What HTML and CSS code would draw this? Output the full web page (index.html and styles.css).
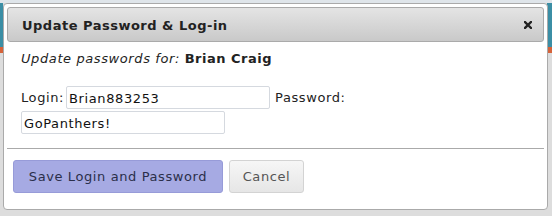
FILE: index.html
```html
<!DOCTYPE html>
<html lang="en">
<head>
    <meta charset="UTF-8">
    <title>Update Password &amp; Log-in</title>
    <link rel="stylesheet" href="styles.css">
</head>
<body>
    <div class="dialog">
        <div class="titlebar">
            <span class="title">Update Password &amp; Log-in</span>
            <button class="close" title="Close">
                <svg width="8" height="8" viewBox="0 0 8 8"><path d="M1 1L7 7M7 1L1 7" stroke="#222" stroke-width="2.4" stroke-linecap="square"/></svg>
            </button>
        </div>

        <div class="content">
            <p class="intro"><em>Update passwords for:</em> <strong>Brian Craig</strong></p>
            <div class="login-row">
                <label for="login" class="lbl-login">Login:</label>
                <input id="login" type="text" value="Brian883253" class="field first">
                <label for="password" class="lbl-pass">Password:</label>
                <input id="password" type="text" value="GoPanthers!" class="field">
            </div>
        </div>

        <div class="buttonpane">
            <button class="btn btn-primary">Save Login and Password</button>
            <button class="btn btn-cancel">Cancel</button>
        </div>
    </div>
</body>
</html>
```

FILE: styles.css
```css
body {
    margin: 0;
    font-family: "DejaVu Sans", Verdana, sans-serif;
    font-size: 13px;
    letter-spacing: 0.6px;
    color: #222;
    background:
        linear-gradient(#dfe5ea, #dfe5ea) 0 0 / 100% 3px no-repeat,
        linear-gradient(#3b8ea5, #3b8ea5) 0 3px / 3px 44px no-repeat,
        linear-gradient(#d6633a, #d6633a) 0 47px / 3px 6px no-repeat,
        linear-gradient(#3b8ea5, #3b8ea5) right 0 top 3px / 5px 44px no-repeat,
        linear-gradient(#d6633a, #d6633a) right 0 top 47px / 5px 6px no-repeat,
        #dddddd;
}
.dialog {
    box-sizing: border-box;
    width: 545px;
    margin: 3px 0 0 3px;
    padding: 3px;
    background: #fff;
    border: 1px solid #aaa;
    border-radius: 4px;
}
.titlebar {
    box-sizing: border-box;
    height: 35px;
    display: flex;
    align-items: center;
    justify-content: space-between;
    padding: 1px 11px 0 14px;
    border: 1px solid #aaa;
    border-radius: 3px;
    background: linear-gradient(#e4e4e4, #c9c9c9);
}
.title {
    font-weight: bold;
    letter-spacing: 0.5px;
    color: #222;
}
.close {
    display: flex;
    padding: 0;
    border: 0;
    background: none;
}
.content {
    padding: 9px 14px 0 14px;
}
.intro {
    margin: 0 0 19px 0;
    line-height: 16px;
}
.intro strong {
    letter-spacing: 0.5px;
}
.login-row {
    display: flex;
    flex-wrap: wrap;
    align-items: center;
    row-gap: 2px;
}
.lbl-login {
    margin-right: 2px;
}
.lbl-pass {
    margin-right: 4px;
}
.field {
    box-sizing: border-box;
    width: 204px;
    height: 23px;
    padding: 1px 2px 0 2px;
    font-family: "DejaVu Sans", Verdana, sans-serif;
    font-size: 13px;
    letter-spacing: 0.6px;
    color: #111;
    border: 1px solid #d5d9df;
    border-radius: 2px;
}
.field.first {
    margin-right: 5px;
}
.buttonpane {
    display: flex;
    gap: 6px;
    margin-top: 14px;
    padding: 11px 0 13px 6px;
    border-top: 1px solid #aaa;
}
.btn {
    box-sizing: border-box;
    height: 33px;
    padding: 0;
    font-family: "DejaVu Sans", Verdana, sans-serif;
    font-size: 13px;
    letter-spacing: 0.6px;
    color: #555;
    border: 1px solid #d3d3d3;
    border-radius: 3px;
    background: linear-gradient(#f6f6f6, #e6e6e6);
}
.btn-primary {
    width: 210px;
    color: #2b2f4a;
    border-color: #979bd8;
    background: #a6aae3;
}
.btn-cancel {
    width: 75px;
}
```
